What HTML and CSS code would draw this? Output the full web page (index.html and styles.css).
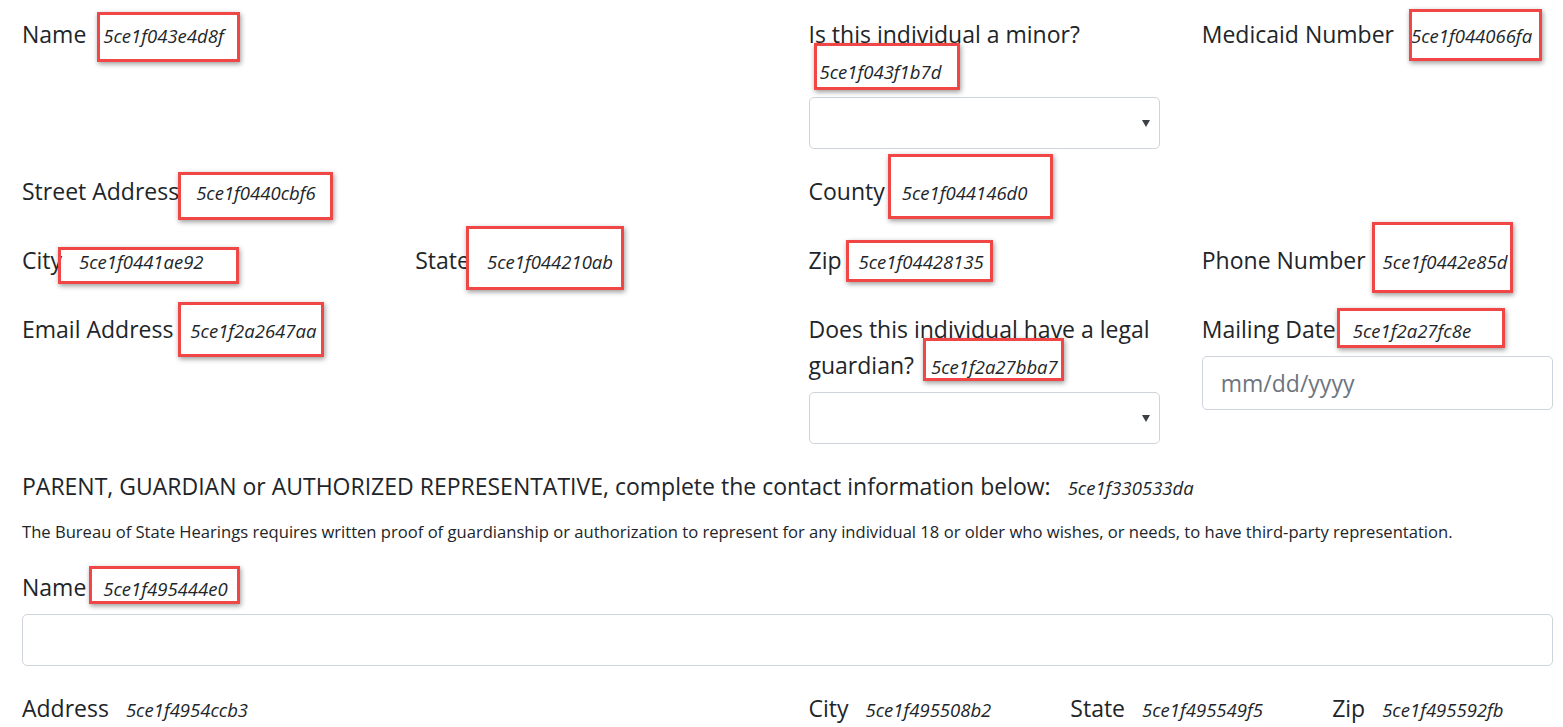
FILE: index.html
```html
<!DOCTYPE html>
<html lang="en">
<head>
<meta charset="utf-8">
<title>Form</title>
<link rel="stylesheet" href="styles.css">
</head>
<body>
<div class="page">
  <div class="row">
    <div class="group span2"><label class="lbl">Name <span class="fid">5ce1f043e4d8f</span></label></div>
    <div class="group">
      <label class="lbl">Is this individual a minor? <span class="fid">5ce1f043f1b7d</span></label>
      <div class="control select"><svg class="caret" width="8" height="7" viewBox="0 0 8 7"><path d="M0 0H8L4 7Z"/></svg></div>
    </div>
    <div class="group"><label class="lbl">Medicaid Number <span class="fid">5ce1f044066fa</span></label></div>
  </div>

  <div class="row">
    <div class="group span2"><label class="lbl">Street Address <span class="fid">5ce1f0440cbf6</span></label></div>
    <div class="group"><label class="lbl">County <span class="fid">5ce1f044146d0</span></label></div>
  </div>

  <div class="row">
    <div class="group"><label class="lbl">City <span class="fid">5ce1f0441ae92</span></label></div>
    <div class="group"><label class="lbl">State <span class="fid">5ce1f044210ab</span></label></div>
    <div class="group"><label class="lbl">Zip <span class="fid">5ce1f04428135</span></label></div>
    <div class="group"><label class="lbl">Phone Number <span class="fid">5ce1f0442e85d</span></label></div>
  </div>

  <div class="row">
    <div class="group span2"><label class="lbl">Email Address <span class="fid">5ce1f2a2647aa</span></label></div>
    <div class="group">
      <label class="lbl">Does this individual have a legal guardian? <span class="fid">5ce1f2a27bba7</span></label>
      <div class="control select"><svg class="caret" width="8" height="7" viewBox="0 0 8 7"><path d="M0 0H8L4 7Z"/></svg></div>
    </div>
    <div class="group">
      <label class="lbl">Mailing Date <span class="fid">5ce1f2a27fc8e</span></label>
      <div class="control date">mm/dd/yyyy</div>
    </div>
  </div>

  <h2 class="heading">PARENT, GUARDIAN or AUTHORIZED REPRESENTATIVE, complete the contact information below: <span class="fid">5ce1f330533da</span></h2>
  <p class="note">The Bureau of State Hearings requires written proof of guardianship or authorization to represent for any individual 18 or older who wishes, or needs, to have third-party representation.</p>

  <div class="group">
    <label class="lbl">Name <span class="fid">5ce1f495444e0</span></label>
    <div class="control"></div>
  </div>

  <div class="row">
    <div class="group span2"><label class="lbl">Address <span class="fid">5ce1f4954ccb3</span></label></div>
    <div class="span2 row3">
      <div class="group"><label class="lbl">City <span class="fid">5ce1f495508b2</span></label></div>
      <div class="group"><label class="lbl">State <span class="fid">5ce1f495549f5</span></label></div>
      <div class="group"><label class="lbl">Zip <span class="fid">5ce1f495592fb</span></label></div>
    </div>
  </div>

  <div class="marks">
    <div class="mark m1"></div>
    <div class="mark m2"></div>
    <div class="mark m3"></div>
    <div class="mark m4"></div>
    <div class="mark m5"></div>
    <div class="mark m6"></div>
    <div class="mark m7"></div>
    <div class="mark m8"></div>
    <div class="mark m9"></div>
    <div class="mark m10"></div>
    <div class="mark m11"></div>
    <div class="mark m12"></div>
    <div class="mark m13"></div>
  </div>
</div>
</body>
</html>
```

FILE: styles.css
```css
html, body {
  margin: 0;
  padding: 0;
  background: #ffffff;
}
body {
  font-family: "Open Sans", "Noto Sans", sans-serif;
  color: #212529;
}
.page {
  position: relative;
  padding: 16px 10px 0 22px;
  height: 727px;
  box-sizing: border-box;
  overflow: hidden;
}
.row {
  display: grid;
  grid-template-columns: repeat(4, 1fr);
  column-gap: 42px;
  align-items: start;
}
.span2 {
  grid-column: span 2;
}
.row3 {
  display: grid;
  grid-template-columns: repeat(3, 1fr);
  column-gap: 41px;
}
.group {
  margin-bottom: 24px;
}
.lbl {
  display: block;
  font-size: 23px;
  line-height: 36px;
  margin-bottom: 9px;
}
.fid {
  font-style: italic;
  font-size: 18.5px;
  line-height: 1;
  margin-left: 11px;
}
.control {
  height: 52px;
  border: 1px solid #ced4da;
  border-radius: 5px;
  box-sizing: border-box;
  background: #fff;
}
.select {
  display: flex;
  align-items: center;
  justify-content: flex-end;
  padding-right: 9px;
}
.caret {
  fill: #3b4046;
}
.date {
  height: 54px;
  display: flex;
  align-items: center;
  padding-left: 18px;
  color: #6c757d;
  font-size: 23px;
}
.heading {
  font-size: 23px;
  line-height: 36px;
  font-weight: 400;
  margin: 0 0 16px;
}
.note {
  font-size: 16.6px;
  line-height: 24px;
  margin: 0 0 25px;
  white-space: nowrap;
}
.marks {
  position: absolute;
  left: 0;
  top: 0;
  width: 0;
  height: 0;
}
.mark {
  position: absolute;
  box-sizing: border-box;
  border: 3px solid #f04646;
  box-shadow: 1px 2px 5px rgba(0, 0, 0, 0.4);
}
.m1 { left: 97px; top: 12px; width: 143px; height: 50px; }
.m2 { left: 814px; top: 43px; width: 146px; height: 47px; }
.m3 { left: 1409px; top: 9px; width: 133px; height: 52px; }
.m4 { left: 178px; top: 172px; width: 155px; height: 48px; }
.m5 { left: 888px; top: 154px; width: 165px; height: 65px; }
.m6 { left: 58px; top: 247px; width: 181px; height: 37px; }
.m7 { left: 466px; top: 226px; width: 158px; height: 64px; }
.m8 { left: 846px; top: 240px; width: 147px; height: 42px; }
.m9 { left: 1372px; top: 222px; width: 141px; height: 71px; }
.m10 { left: 178px; top: 302px; width: 146px; height: 55px; }
.m11 { left: 923px; top: 338px; width: 141px; height: 43px; }
.m12 { left: 1337px; top: 308px; width: 168px; height: 40px; }
.m13 { left: 89px; top: 566px; width: 151px; height: 38px; }
```
